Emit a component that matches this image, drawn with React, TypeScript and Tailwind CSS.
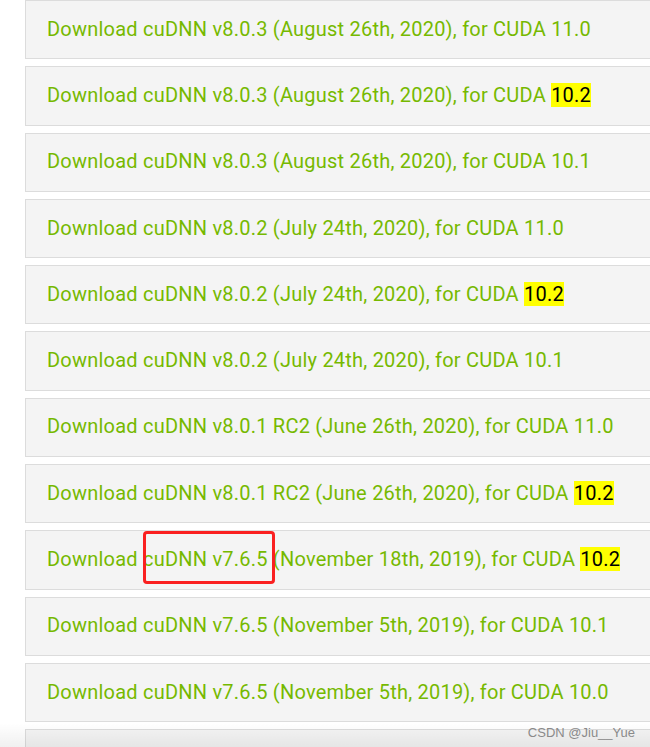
import React from "react";

type Row = { text: string; cuda: string; hl?: boolean; box?: boolean };

const rows: Row[] = [
  { text: "Download cuDNN v8.0.3 (August 26th, 2020), for CUDA ", cuda: "11.0" },
  { text: "Download cuDNN v8.0.3 (August 26th, 2020), for CUDA ", cuda: "10.2", hl: true },
  { text: "Download cuDNN v8.0.3 (August 26th, 2020), for CUDA ", cuda: "10.1" },
  { text: "Download cuDNN v8.0.2 (July 24th, 2020), for CUDA ", cuda: "11.0" },
  { text: "Download cuDNN v8.0.2 (July 24th, 2020), for CUDA ", cuda: "10.2", hl: true },
  { text: "Download cuDNN v8.0.2 (July 24th, 2020), for CUDA ", cuda: "10.1" },
  { text: "Download cuDNN v8.0.1 RC2 (June 26th, 2020), for CUDA ", cuda: "11.0" },
  { text: "Download cuDNN v8.0.1 RC2 (June 26th, 2020), for CUDA ", cuda: "10.2", hl: true },
  { text: "Download cuDNN v7.6.5 (November 18th, 2019), for CUDA ", cuda: "10.2", hl: true, box: true },
  { text: "Download cuDNN v7.6.5 (November 5th, 2019), for CUDA ", cuda: "10.1" },
  { text: "Download cuDNN v7.6.5 (November 5th, 2019), for CUDA ", cuda: "10.0" },
  { text: "", cuda: "" },
];

export default function App() {
  return (
    <div className="relative w-[650px] h-[747px] overflow-hidden bg-white">
      <div className="flex flex-col gap-[7px] pl-[25px] w-[700px]">
        {rows.map((r, i) => (
          <div
            key={i}
            className="relative h-[59.3px] shrink-0 border border-[#dcdcdc] bg-[#f4f4f4] flex items-center pl-[21px]"
          >
            <span
              className="text-[20px] leading-none text-[#76b900] whitespace-nowrap tracking-[0.22px] -translate-y-[1px]"
              style={{ fontFamily: "Roboto, 'Liberation Sans', sans-serif" }}
            >
              {r.text}
              {r.cuda &&
                (r.hl ? (
                  <span className="bg-[#ffff00] text-black">{r.cuda}</span>
                ) : (
                  r.cuda
                ))}
            </span>
            {r.box && (
              <div className="absolute left-[117px] top-[0px] w-[132px] h-[53px] border-[3px] border-[#fa2020] rounded-[4px]" />
            )}
          </div>
        ))}
      </div>
      <div className="absolute left-0 right-0 bottom-0 h-[24px] bg-gradient-to-b from-transparent to-[rgba(0,0,0,0.06)] pointer-events-none" />
      <div
        className="absolute right-[15px] bottom-[8px] text-[13px] text-[#8a8a8a] leading-none"
        style={{ fontFamily: "'Liberation Sans', Arial, sans-serif" }}
      >
        CSDN @Jiu__Yue
      </div>
    </div>
  );
}
